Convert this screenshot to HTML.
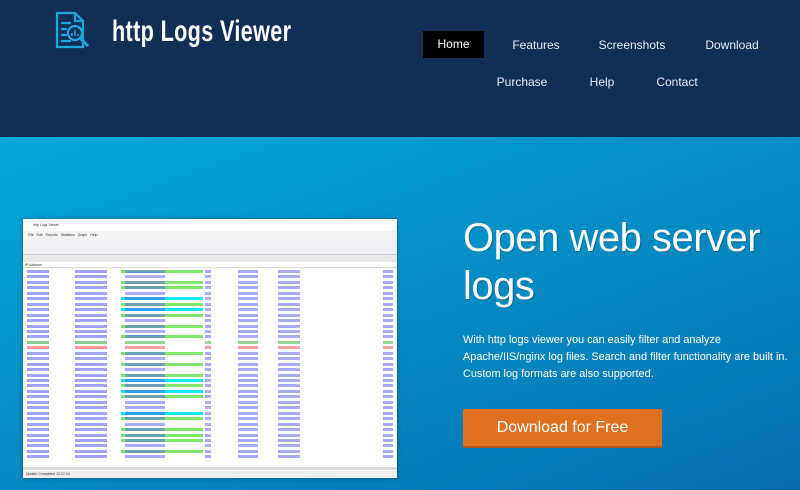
<!DOCTYPE html>
<html><head><meta charset="utf-8"><style>
*{margin:0;padding:0;box-sizing:border-box}
body{width:800px;height:490px;overflow:hidden;font-family:"Liberation Sans",sans-serif;background:#0a8cc6;position:relative}
#hdr{position:absolute;left:0;top:0;width:800px;height:137px;background:#112f55}
#hero{position:absolute;left:0;top:137px;width:800px;height:353px;background:linear-gradient(160deg,#05aad8 0%,#0592c8 40%,#066fae 100%)}
.logo{position:absolute;left:112px;top:15px;color:#fff;font:bold 30px "Liberation Sans Narrow","Liberation Sans",sans-serif;white-space:nowrap;transform:scaleX(.72);transform-origin:left;letter-spacing:.5px}
.nav{position:absolute;color:#e8eef5;font-size:12px;transform:translateX(-50%);white-space:nowrap}
.home{position:absolute;left:423px;top:31px;width:61px;height:27px;background:#000;color:#fff;font-size:12px;text-align:center;line-height:27px}
h1{position:absolute;left:463px;top:214px;color:#fff;font-weight:normal;font-size:40px;letter-spacing:-.5px;line-height:48px;white-space:nowrap;text-shadow:1px 1px 1px rgba(0,0,0,.25)}
p{position:absolute;left:463px;top:332px;color:#fff;font-size:10.9px;line-height:17px;width:335px}
.btn{position:absolute;left:463px;top:409px;width:199px;height:39px;background:#df7020;border-bottom:2px solid #b9561a;border-radius:2px;color:#fff;font-size:16px;text-align:center;line-height:38px}
#app{position:absolute;left:23px;top:219px;width:374px;height:259px;background:#fff;box-shadow:0 0 4px rgba(0,0,0,.4);font-size:3.5px;color:#333;overflow:hidden}
.bar{position:absolute;left:0;width:374px}
.row{position:absolute;left:0;width:374px;height:5.45px}
.row span{position:absolute;top:1px;height:3px}
</style></head><body>
<div id="hdr">
<svg style="position:absolute;left:55px;top:11px" width="42" height="40" viewBox="0 0 42 40" fill="none" stroke="#1ea6e0" stroke-width="2.2">
<path d="M2 2h18l8 8v26H2z"/><path d="M20 2v8h8"/><path d="M6 12h10M6 18h6M6 24h6M6 30h10"/>
<circle cx="20" cy="22" r="7"/><path d="M25 27l8 8" stroke-width="3"/><path d="M17 25v-3M20 25v-6M23 25v-2" stroke-width="1.5"/></svg>
<div class="logo">http Logs Viewer</div>
<div class="home">Home</div>
<div class="nav" style="left:536px;top:38px">Features</div>
<div class="nav" style="left:632px;top:38px">Screenshots</div>
<div class="nav" style="left:732px;top:38px">Download</div>
<div class="nav" style="left:522px;top:75px">Purchase</div>
<div class="nav" style="left:602px;top:75px">Help</div>
<div class="nav" style="left:677px;top:75px">Contact</div>
</div>
<div id="hero"></div>
<div id="app">
<div class="bar" style="top:0;height:12px;background:#fff;padding:4px 0 0 10px">http Logs Viewer</div>
<div class="bar" style="top:12px;height:8px;background:#f3f3f3;padding:2px 5px">File &nbsp; Edit &nbsp; Reports &nbsp; Statistics &nbsp; Graph &nbsp; Help</div>
<div class="bar" style="top:20px;height:16px;background:#eef0f3;border-bottom:1px solid #ccc"></div>
<div class="bar" style="top:36px;height:7px;background:#e8e8e8"></div>
<div class="bar" style="top:43px;height:6px;background:#fff;border-bottom:1px solid #ddd;padding:1px 2px">IP Address</div>
<div id="rows"></div>
<div class="bar" style="top:248px;height:3px;background:#ddd"></div>
<div class="bar" style="top:252px;height:7px;background:#eee;padding:1px 3px">Update Completed 12:27:24</div>
</div>
<h1>Open web server<br>logs</h1>
<p>With http logs viewer you can easily filter and analyze Apache/IIS/nginx log files. Search and filter functionality are built in. Custom log formats are also supported.</p>
<div class="btn">Download for Free</div>
<script>
var t="gbgggcgcgbggg0rgbgggcgcgbgcgbgggcgbcggbg";var h="";
for(var i=0;i<35;i++){var c=t[i]||"g";var y=50+i*5.45;
var col=c=="r"?"#f44":(c=="0"?"#3a3":"#55f");
var bg=c=="g"?"#7fe86a":(c=="c"?"#12e8f5":"transparent");
if(i%7==4)bg="transparent";
h+='<div class="row" style="top:'+y+'px"><span style="left:4px;width:22px;background:'+col+';opacity:.55"></span><span style="left:52px;width:32px;background:'+col+';opacity:.55"></span><span style="left:98px;width:82px;background:'+bg+'"></span><span style="left:102px;width:40px;background:'+col+';opacity:.5"></span><span style="left:182px;width:6px;background:'+col+';opacity:.5"></span><span style="left:215px;width:20px;background:'+col+';opacity:.5"></span><span style="left:255px;width:22px;background:'+col+';opacity:.5"></span><span style="left:360px;width:10px;background:'+col+';opacity:.5"></span></div>';}
document.getElementById("rows").innerHTML=h;
</script>
</body></html>
